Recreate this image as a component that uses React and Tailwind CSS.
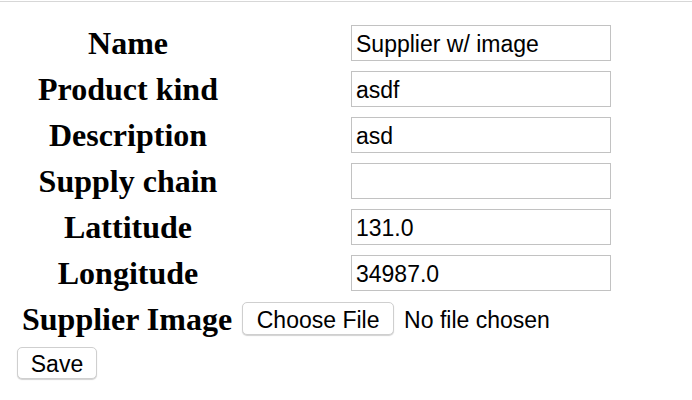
import React from "react";

const rows = [
  ["Name", "Supplier w/ image"],
  ["Product kind", "asdf"],
  ["Description", "asd"],
  ["Supply chain", ""],
  ["Lattitude", "131.0"],
  ["Longitude", "34987.0"],
];

export default function App() {
  const serif = { fontFamily: '"Liberation Serif", "Times New Roman", serif' };
  const sans = { fontFamily: '"Liberation Sans", Arial, sans-serif' };
  return (
    <div className="w-[692px] h-[400px] bg-white overflow-hidden">
      <div className="h-px bg-white" />
      <div className="h-px bg-[#d7d7d7]" />
      <div className="pl-[17px] pt-[18px]">
        {rows.map(([label, value]) => (
          <div key={label} className="flex items-center h-[46px]">
            <div
              className="w-[222px] text-center font-bold text-[32px] leading-[36px] text-black"
              style={serif}
            >
              {label}
            </div>
            <div className="pl-[112px]">
              <input
                readOnly
                value={value}
                className="w-[260px] h-[36px] border border-[#c2c2c2] pl-[4px] pr-[4px] pt-[2px] text-[23px] text-black outline-none"
                style={sans}
              />
            </div>
          </div>
        ))}
        <div className="flex items-center mt-[6px] h-[33px]">
          <span
            className="ml-[5px] font-bold text-[32px] leading-[36px] text-black"
            style={serif}
          >
            Supplier Image
          </span>
          <button
            className="ml-[10px] w-[152px] h-[33px] pt-[3px] bg-white border border-[#cfcfcf] rounded-[5px] shadow-[0_1px_1px_rgba(0,0,0,0.18)] text-[23px] text-black leading-none"
            style={sans}
          >
            Choose File
          </button>
          <span className="ml-[10px] pt-[3px] text-[23px] text-black" style={sans}>
            No file chosen
          </span>
        </div>
        <button
          className="mt-[12px] w-[80px] h-[32px] pt-[3px] bg-white border border-[#cfcfcf] rounded-[5px] shadow-[0_1px_1px_rgba(0,0,0,0.18)] text-[23px] text-black leading-none block"
          style={sans}
        >
          Save
        </button>
      </div>
    </div>
  );
}
